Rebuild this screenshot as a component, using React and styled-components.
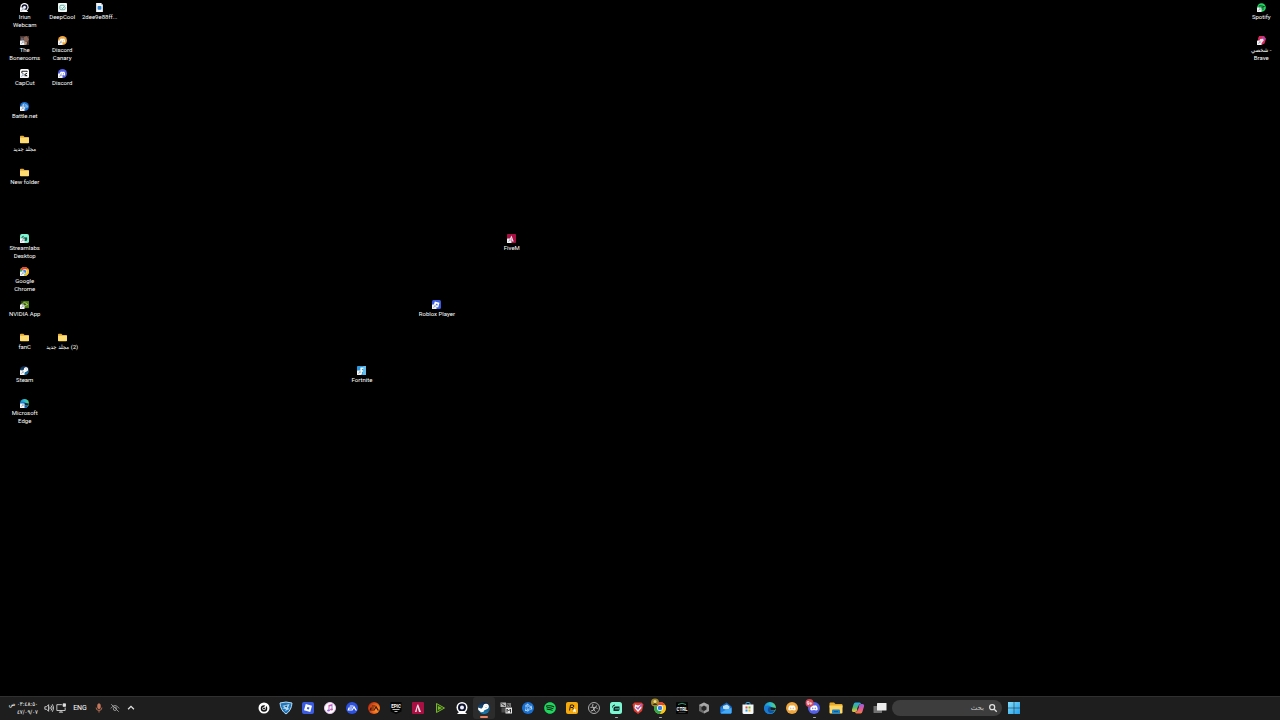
import React from "react";
import styled, { createGlobalStyle, css } from "styled-components";
import {
  FaBattleNet,
  FaDiscord,
  FaSpotify,
  FaSteamSymbol,
} from "react-icons/fa";

const GlobalStyle = createGlobalStyle`
  * {
    box-sizing: border-box;
  }

  body {
    margin: 0;
    background: #000;
    color: #fff;
    font-family: Roboto, "DejaVu Sans Condensed", "DejaVu Sans", sans-serif;
  }

  button,
  input {
    margin: 0;
    padding: 0;
    border: 0;
    background: none;
    color: inherit;
    font: inherit;
  }
`;

const Screen = styled.div`
  display: flex;
  flex-direction: column;
  min-height: 100vh;
`;

const Desktop = styled.main`
  flex: 1;
  display: grid;
  grid-template-columns: repeat(34, minmax(0, 1fr));
  grid-auto-rows: 33px;
  padding-left: 6px;
`;

const Shortcut = styled.button`
  grid-column: ${(props) => props.$col};
  grid-row: ${(props) => props.$row};
  display: flex;
  flex-direction: column;
  align-items: center;
  gap: 1px;
  padding-top: 3px;
`;

const ShortcutIcon = styled.svg`
  flex: none;
  width: 9px;
  height: 9px;
`;

const ShortcutName = styled.span`
  font-size: 6px;
  line-height: 8px;
  text-align: center;
  white-space: pre;
`;

const Taskbar = styled.footer`
  display: grid;
  grid-template-columns: 1fr auto 1fr;
  align-items: center;
  height: 24px;
  padding: 0 2px 1px 0;
  border-top: 1px solid #303030;
  background: #1e1e1e;
`;

const Tray = styled.div`
  display: flex;
  align-items: center;
  gap: 4px;
  padding-left: 8px;
`;

const Clock = styled.button`
  width: 30px;
  margin-right: 2px;
  font-family: "DejaVu Sans Condensed", "DejaVu Sans", sans-serif;
  font-size: 6px;
  line-height: 8px;
  text-align: right;
  white-space: nowrap;
`;

const ClockLine = styled.span`
  display: block;
`;

const TrayGroup = styled.div`
  display: flex;
  gap: ${(props) => props.$gap};
`;

const TrayButton = styled.button`
  display: flex;
`;

const TrayIcon = styled.svg`
  width: 10px;
  height: 10px;
`;

const Language = styled.button`
  width: 18px;
  margin: 0 1px;
  font-size: 7px;
  line-height: 10px;
`;

const Apps = styled.nav`
  display: flex;
  align-items: center;
`;

const AppButton = styled.button`
  position: relative;
  display: flex;
  align-items: center;
  justify-content: center;
  width: 22px;
  height: 22px;
  border-radius: 3px;

  ${(props) =>
    props.$state === "active" &&
    css`
      background: #2c2c2c;
    `}

  ${(props) =>
    props.$state &&
    css`
      &::after {
        content: "";
        position: absolute;
        bottom: 1px;
        width: ${props.$state === "active" ? "8px" : "3px"};
        height: ${props.$state === "active" ? "2px" : "1px"};
        border-radius: 1px;
        background: ${props.$state === "active" ? "#e8866a" : "#a5a5a5"};
      }
    `}
`;

const AppIcon = styled.svg`
  width: 12px;
  height: 12px;
  overflow: visible;
`;

const Search = styled.label`
  display: flex;
  align-items: center;
  gap: 4px;
  width: 110px;
  height: 16px;
  margin: 0 1px;
  padding: 0 4px;
  border-radius: 8px;
  background: #3d3d3d;
`;

const SearchInput = styled.input`
  flex: 1;
  min-width: 0;
  font-family: "DejaVu Sans", sans-serif;
  font-size: 7px;
  line-height: 12px;
  outline: 0;

  &::placeholder {
    color: #c4c4c4;
    opacity: 1;
  }
`;

/* All icons are drawn on a 24x24 canvas */

const Arrow = () => (
  <>
    <rect x="0" y="12" width="12" height="12" rx="1" fill="#f4f4f4" />
    <path
      d="M4 21q0-4 4-4M6 15h3v3"
      fill="none"
      stroke="#6d8aa6"
      strokeWidth="1.5"
    />
  </>
);

const Folder = () => (
  <>
    <path d="M0 4q0-2 2-2h7l3 3h10q2 0 2 2v12H0z" fill="#e3ac38" />
    <path d="M0 7h24v13q0 2-2 2H2q-2 0-2-2z" fill="#ffdc71" />
  </>
);

const Iriun = () => (
  <>
    <circle cx="12" cy="11" r="11" fill="#fff" />
    <circle cx="12" cy="11" r="6" fill="#eef" stroke="#10142c" strokeWidth="4" />
    <path d="M2 24l6-6h8l6 6z" fill="#fff" />
  </>
);

const DeepCool = () => (
  <>
    <rect width="24" height="24" rx="2" fill="#f1f8f6" />
    <path
      d="M17 6H8q-3 0-3 3v6q0 3 3 3h8q3 0 3-3v-4"
      fill="none"
      stroke="#39988d"
      strokeWidth="2"
    />
    <path d="M9 12l3 3 7-8" fill="none" stroke="#39988d" strokeWidth="2" />
  </>
);

const Document = () => (
  <>
    <path d="M3 0h13l5 5v19H3z" fill="#f2f6fa" />
    <path d="M16 0v5h5z" fill="#b9c7d4" />
    <rect x="7" y="8" width="10" height="10" rx="2" fill="#2e86d3" />
  </>
);

const Bonerooms = () => (
  <>
    <rect width="24" height="24" fill="#46322e" />
    <path d="M10 3l8-3 6 9-5 7-8-4z" fill="#8b6657" />
    <path d="M3 3l7 2-1 8-7-3z" fill="#6a6470" />
    <path d="M14 14l5 3-2 7h-6z" fill="#c09a7b" />
  </>
);

const CapCut = () => (
  <>
    <rect width="24" height="24" rx="4" fill="#fff" />
    <path
      d="M19 8V6H5v5l14 7H8M19 11L8 17"
      fill="none"
      stroke="#111"
      strokeWidth="2.5"
    />
  </>
);

const BattleNet = () => (
  <>
    <circle cx="12" cy="12" r="12" fill="#176fd2" />
    <FaBattleNet x="3" y="3" size={18} color="#d7efff" />
  </>
);

const DiscordMark = ({ color }) => (
  <>
    <circle cx="12" cy="12" r="12" fill={color} />
    <FaDiscord x="4" y="4" size={16} color="#fff" />
  </>
);

const Discord = () => <DiscordMark color="#5460e6" />;

const DiscordCanary = () => <DiscordMark color="#efa63c" />;

const DiscordBadge = () => (
  <>
    <Discord />
    <circle cx="3" cy="2" r="8" fill="#d94452" />
    <text
      x="3"
      y="6"
      fill="#fff"
      fontSize="10"
      fontWeight="700"
      textAnchor="middle"
    >
      9+
    </text>
  </>
);

const Streamlabs = () => (
  <>
    <rect width="24" height="24" rx="5" fill="#7df5d0" />
    <path d="M7 18v-5q0-4 4-4h8v6q0 3-3 3z" fill="#0b2a2a" />
    <path d="M12 12v3M16 12v3" stroke="#7df5d0" strokeWidth="2" />
    <path d="M5 11q0-5 5-5" fill="none" stroke="#0b2a2a" strokeWidth="2" />
  </>
);

const Chrome = () => (
  <>
    <circle cx="12" cy="12" r="12" fill="#fbc116" />
    <path d="M12 12L1.6 6A12 12 0 0 1 22.4 6z" fill="#e64435" />
    <path d="M12 12L1.6 6A12 12 0 0 0 12 24l5-9z" fill="#2fa650" />
    <path d="M12 6h10.400A12 12 0 0 1 12 24l5.5-9z" fill="#fbc116" />
    <circle cx="12" cy="12" r="6" fill="#fff" />
    <circle cx="12" cy="12" r="4.5" fill="#397fe6" />
  </>
);

const ChromeProfile = () => (
  <>
    <Chrome />
    <circle cx="2" cy="1" r="8" fill="#a3892b" />
    <circle cx="2" cy="-1" r="3" fill="#f0dc8a" />
    <path d="M-3 6q5-7 10 0z" fill="#352e16" />
  </>
);

const Nvidia = () => (
  <>
    <path d="M2 2h22v20H2z" fill="#243b0c" />
    <path d="M9 3h15v18H9z" fill="#568416" />
    <path
      d="M3 12q8-9 17 0-8 8-17 0z"
      fill="none"
      stroke="#c0e885"
      strokeWidth="2"
    />
    <circle cx="12" cy="12" r="3" fill="#1b2f08" />
  </>
);

const Steam = () => (
  <>
    <defs>
      <linearGradient id="steam" x1="0" y1="0" x2="0" y2="1">
        <stop offset="0" stopColor="#14213f" />
        <stop offset="1" stopColor="#1684bd" />
      </linearGradient>
    </defs>
    <circle cx="12" cy="12" r="12" fill="url(#steam)" />
    <path d="M0 11l9 4 4-4 5 3-6 3q-1 4-5 3l-6-4z" fill="#fff" />
    <circle cx="16" cy="9" r="4" fill="#14213f" stroke="#fff" strokeWidth="3" />
    <circle cx="8" cy="17" r="3" fill="#fff" />
    <FaSteamSymbol x="0" y="1" size={22} color="#fff" />
  </>
);

const Edge = () => (
  <>
    <defs>
      <linearGradient id="edge" x1="0" y1="0.5" x2="1" y2="0.2">
        <stop offset="0" stopColor="#1787d4" />
        <stop offset="0.6" stopColor="#29bed3" />
        <stop offset="1" stopColor="#62d862" />
      </linearGradient>
    </defs>
    <circle cx="12" cy="12" r="12" fill="url(#edge)" />
    <path
      d="M0 12q1-5 8-5 6 0 7 5 0 2-2 3 2 4 9 2-3 7-10 7Q1 24 0 12z"
      fill="#1a7ad2"
    />
    <path d="M9 11q-4 7 3 11 6 1 10-5-10 3-10-3 2-1 1-3-2-2-4 0z" fill="#14509a" />
    <path d="M12 14q2-1 1-4 5 1 11 2 0 4-5 5-6 0-7-3z" fill="#1e1e1e" />
  </>
);

const FiveM = () => (
  <>
    <rect width="24" height="24" rx="2" fill="#a80f43" />
    <path d="M6 20l4-13 2-3 6 16h-4l-3-10-2 10z" fill="#fbdde7" />
  </>
);

const Roblox = () => (
  <>
    <rect width="24" height="24" rx="4" fill="#3b5be0" />
    <path
      d="M7.500 4L20 7.500 16.500 20 4 16.500zM10.800 9.800l-1.100 4.200 4.200 1.100 1.100-4.200z"
      fill="#fff"
      fillRule="evenodd"
    />
  </>
);

const Fortnite = () => (
  <>
    <rect width="24" height="24" rx="2" fill="#2a9be0" />
    <path d="M17 0h7v24h-9z" fill="#64bdec" />
    <path d="M9 4h8v4h-4v3h3v4h-3v6H9z" fill="#fff" />
  </>
);

const Spotify = () => (
  <>
    <circle cx="12" cy="12" r="11" fill="#0b1e11" />
    <FaSpotify size={24} color="#1fd75f" />
  </>
);

const BraveProfile = () => (
  <>
    <path d="M6 0h13l5 7-4 13-8 4-9-5V5z" fill="#d92b62" />
    <path d="M13 2l10 4-6 8z" fill="#9b4cc4" />
    <path d="M8 8l8-1 2 5-6 7-5-5z" fill="#ffe0dd" />
  </>
);

const Disc = () => (
  <>
    <circle cx="12" cy="12" r="11" fill="#fff" />
    <circle cx="12" cy="13" r="5" fill="#fff" stroke="#111" strokeWidth="3" />
    <path d="M12 13l6-9" stroke="#fff" strokeWidth="3" />
    <circle cx="12" cy="13" r="2" fill="#111" />
  </>
);

const RocketLeague = () => (
  <>
    <path
      d="M0 2q12-4 24 0-1 15-12 22Q1 17 0 2z"
      fill="#1e75bb"
      stroke="#bcdcf0"
      strokeWidth="2"
    />
    <path d="M4 8l15-4-3 8 3 2-9 4 2-4-7-1 4-3z" fill="#b4daf0" />
    <path d="M9 8l6-1-2 4z" fill="#174877" />
  </>
);

const Music = () => (
  <>
    <defs>
      <linearGradient id="music" x1="0" y1="0" x2="1" y2="1">
        <stop offset="0" stopColor="#fa4b79" />
        <stop offset="0.5" stopColor="#b462dc" />
        <stop offset="1" stopColor="#4ca8ef" />
      </linearGradient>
    </defs>
    <circle cx="12" cy="12" r="11" fill="#fff" stroke="#e7c8ee" strokeWidth="2" />
    <path d="M9 6l8-2v11h-2V8l-4 1v8H9z" fill="url(#music)" />
    <ellipse cx="9" cy="17" rx="3" ry="2" fill="#9b6ae2" />
    <ellipse cx="15" cy="15" rx="3" ry="2" fill="#d457aa" />
  </>
);

const EaMark = ({ fill, ink }) => (
  <>
    <circle cx="12" cy="12" r="12" fill={fill} />
    <path
      d="M8 7h7l-1 2H7zM5 11h8l-1 2H7l-1 2h6l4-8 6 10h-3l-3-5-3 5H3z"
      fill={ink}
    />
  </>
);

const EaApp = () => <EaMark fill="#2c50e0" ink="#fff" />;

const EaPlay = () => (
  <>
    <defs>
      <radialGradient id="ember" cx="0.7" cy="0.6" r="0.7">
        <stop offset="0" stopColor="#ffa02d" />
        <stop offset="0.5" stopColor="#f06a1c" />
        <stop offset="1" stopColor="#b82c12" />
      </radialGradient>
    </defs>
    <EaMark fill="url(#ember)" ink="#4a1209" />
  </>
);

const Epic = () => (
  <>
    <path d="M1 0h22v19l-11 5-11-5z" fill="#050505" />
    <text
      x="12"
      y="11"
      fill="#fff"
      fontSize="9"
      fontWeight="700"
      textAnchor="middle"
    >
      EPIC
    </text>
    <path d="M5 15h14M9 19h6" stroke="#bbb" strokeWidth="2" />
  </>
);

const GreenPlay = () => (
  <>
    <path
      d="M5 3l16 9-16 9z"
      fill="#2a4510"
      stroke="#79b531"
      strokeWidth="2"
    />
    <path d="M8 8l8 4-8 4z" fill="#79b531" />
  </>
);

const Patchwork = () => (
  <>
    <path d="M1 1h11v9H1z" fill="#b8b8b8" />
    <path d="M13 2h9v8h-9z" fill="#737373" />
    <path d="M3 11h8v10H3z" fill="#4c4c4c" />
    <path d="M11 11h13v12H11z" fill="#e9e9e9" />
    <path d="M3 3l7 5M14 3l5 6" stroke="#333" strokeWidth="2" />
    <path d="M14 21v-7l3 4 4-4v7" fill="none" stroke="#333" strokeWidth="2" />
  </>
);

const Rockstar = () => (
  <>
    <rect width="24" height="24" rx="4" fill="#f5a90d" />
    <path
      d="M7 17L9 6h5q4 1 0 5H9M13 11q2 1 1 5"
      fill="none"
      stroke="#2a1c00"
      strokeWidth="2"
    />
    <path d="M17 12l1 3h3l-2 2 1 4-3-2-3 2 1-4-2-2h3z" fill="#fff" />
  </>
);

const Obs = () => (
  <>
    <circle cx="12" cy="12" r="11" fill="#242424" stroke="#aaa" strokeWidth="2" />
    <path
      d="M12 12q-5-3-2-8M12 12q5-3 7 2M12 12q0 6-6 6M5 11q3-2 7 1M17 7q0 4-5 5M15 19q-4-2-3-7"
      fill="none"
      stroke="#b4b4b4"
      strokeWidth="2"
    />
  </>
);

const ShieldCheck = () => (
  <>
    <path d="M5 1h14l4 4-3 13-8 6-8-6L1 5z" fill="#df3a32" />
    <path d="M6 5l6 2 6-2 1 7-7 8-7-8z" fill="#fff" />
    <path d="M8 10l4 4 8-10" fill="none" stroke="#b05bb5" strokeWidth="3" />
  </>
);

const Ctrl = () => (
  <>
    <rect width="24" height="24" rx="2" fill="#050505" />
    <path d="M4 5q8-5 16 0" fill="none" stroke="#319970" strokeWidth="2" />
    <text
      x="12"
      y="17"
      fill="#fff"
      fontSize="9"
      fontWeight="700"
      textAnchor="middle"
    >
      CTRL
    </text>
    <path d="M5 21h14" stroke="#666" />
  </>
);

const Cube = () => (
  <>
    <path d="M12 1l10 5v12l-10 5-10-5V6z" fill="#6b6b6b" />
    <path d="M12 1l10 5-10 6L2 6z" fill="#a8a8a8" />
    <path d="M12 12l10-6v12l-10 5z" fill="#a0a0a0" />
    <path d="M12 7l5 3v5l-5 3-5-3v-5z" fill="#262626" />
  </>
);

const Outlook = () => (
  <>
    <path d="M1 9L13 1l10 8v12q0 2-2 2H3q-2 0-2-2z" fill="#1268c5" />
    <path d="M6 8l8-3 5 4v6H6z" fill="#b8e0fb" />
    <path d="M1 10l12 7 10-7v11q0 2-2 2H3q-2 0-2-2z" fill="#1f7fe0" />
    <path d="M1 22l12-7 10-3v9q0 2-2 2H3z" fill="#45aaf4" />
  </>
);

const Store = () => (
  <>
    <path
      d="M8 6V3q0-2 2-2h4q2 0 2 2v3"
      fill="none"
      stroke="#35a5e4"
      strokeWidth="2"
    />
    <path d="M1 5h22v16q0 3-3 3H4q-3 0-3-3z" fill="#f2f6f9" />
    <path d="M7 9h4v4H7z" fill="#e74d2e" />
    <path d="M13 9h4v4h-4z" fill="#78b51b" />
    <path d="M7 15h4v4H7z" fill="#209fe2" />
    <path d="M13 15h4v4h-4z" fill="#f5b51c" />
  </>
);

const Explorer = () => (
  <>
    <path d="M-1 3q0-2 2-2h7l3 3h12q2 0 2 2v5H-1z" fill="#e8a925" />
    <path d="M-1 7h26v14q0 2-2 2H1q-2 0-2-2z" fill="#ffd762" />
    <path d="M4 23v-6q0-2 2-2h12q2 0 2 2v6z" fill="#1686cf" />
    <path d="M8 19h8" stroke="#105c96" strokeWidth="2" />
  </>
);

const Copilot = () => (
  <>
    <defs>
      <linearGradient id="pilotLeft" x1="0" y1="0" x2="0" y2="1">
        <stop offset="0" stopColor="#26a9ed" />
        <stop offset="0.5" stopColor="#4cb96d" />
        <stop offset="1" stopColor="#f1c33b" />
      </linearGradient>
      <linearGradient id="pilotRight" x1="0" y1="0" x2="0" y2="1">
        <stop offset="0" stopColor="#9260df" />
        <stop offset="0.5" stopColor="#e5579a" />
        <stop offset="1" stopColor="#f47c3c" />
      </linearGradient>
    </defs>
    <path
      d="M7 1h8q3 0 3 4h-4l-4 12q-1 3-4 3H3q-4 0-3-5L3 5q1-4 4-4z"
      fill="url(#pilotLeft)"
    />
    <path
      d="M17 23H9q-3 0-3-4h4l4-12q1-3 4-3h3q4 0 3 5l-3 10q-1 4-4 4z"
      fill="url(#pilotRight)"
    />
    <path d="M12 9h2l-2 6h-2z" fill="#1e1e1e" />
  </>
);

const TaskView = () => (
  <>
    <rect x="-1" y="8" width="17" height="14" rx="1" fill="#707070" />
    <rect x="6" y="2" width="19" height="15" rx="1" fill="#ececec" />
  </>
);

const Start = () => (
  <>
    <defs>
      <linearGradient id="start" x1="0" y1="0" x2="1" y2="1">
        <stop offset="0" stopColor="#7fdcfb" />
        <stop offset="1" stopColor="#219fe9" />
      </linearGradient>
    </defs>
    <path
      d="M0 0h11.5v11.5H0zM12.5 0H24v11.5H12.5zM0 12.5h11.5V24H0zM12.5 12.5H24V24H12.5z"
      fill="url(#start)"
    />
  </>
);

const shortcuts = [
  { name: "Iriun\nWebcam", icon: Iriun, col: 1, row: 1 },
  { name: "DeepCool", icon: DeepCool, col: 2, row: 1, plain: true },
  { name: "2dee9e88ff...", icon: Document, col: 3, row: 1, plain: true },
  { name: "The\nBonerooms", icon: Bonerooms, col: 1, row: 2 },
  { name: "Discord\nCanary", icon: DiscordCanary, col: 2, row: 2 },
  { name: "CapCut", icon: CapCut, col: 1, row: 3 },
  { name: "Discord", icon: Discord, col: 2, row: 3 },
  { name: "Battle.net", icon: BattleNet, col: 1, row: 4 },
  { name: "مجلد جديد", icon: Folder, col: 1, row: 5, plain: true },
  { name: "New folder", icon: Folder, col: 1, row: 6, plain: true },
  { name: "Streamlabs\nDesktop", icon: Streamlabs, col: 1, row: 8 },
  { name: "Google\nChrome", icon: Chrome, col: 1, row: 9 },
  { name: "NVIDIA App", icon: Nvidia, col: 1, row: 10 },
  { name: "fanC", icon: Folder, col: 1, row: 11, plain: true },
  { name: "(2) مجلد جديد", icon: Folder, col: 2, row: 11, plain: true },
  { name: "Steam", icon: Steam, col: 1, row: 12 },
  { name: "Microsoft\nEdge", icon: Edge, col: 1, row: 13 },
  { name: "Fortnite", icon: Fortnite, col: 10, row: 12 },
  { name: "Roblox Player", icon: Roblox, col: 12, row: 10 },
  { name: "FiveM", icon: FiveM, col: 14, row: 8 },
  { name: "Spotify", icon: Spotify, col: 34, row: 1 },
  { name: "شخصي -\nBrave", icon: BraveProfile, col: 34, row: 2, dir: "ltr" },
];

const apps = [
  { name: "Disc", icon: Disc },
  { name: "Rocket League", icon: RocketLeague },
  { name: "Roblox", icon: Roblox },
  { name: "iTunes", icon: Music },
  { name: "EA", icon: EaApp },
  { name: "EA Play", icon: EaPlay },
  { name: "Epic Games", icon: Epic },
  { name: "FiveM", icon: FiveM },
  { name: "Play", icon: GreenPlay },
  { name: "Iriun Webcam", icon: Iriun },
  { name: "Steam", icon: Steam, state: "active" },
  { name: "Mods", icon: Patchwork },
  { name: "Battle.net", icon: BattleNet },
  { name: "Spotify", icon: Spotify },
  { name: "Rockstar Games", icon: Rockstar },
  { name: "OBS Studio", icon: Obs },
  { name: "Streamlabs", icon: Streamlabs, state: "open" },
  { name: "Brave", icon: ShieldCheck },
  { name: "Google Chrome", icon: ChromeProfile, state: "open" },
  { name: "CTRL", icon: Ctrl },
  { name: "Cube", icon: Cube },
  { name: "Outlook", icon: Outlook },
  { name: "Microsoft Store", icon: Store },
  { name: "Microsoft Edge", icon: Edge },
  { name: "Discord Canary", icon: DiscordCanary },
  { name: "Discord", icon: DiscordBadge, state: "open" },
  { name: "File Explorer", icon: Explorer },
  { name: "Copilot", icon: Copilot },
  { name: "Task View", icon: TaskView },
];

const DesktopShortcut = ({ name, icon: Icon, col, row, plain, dir }) => (
  <Shortcut $col={col} $row={row}>
    <ShortcutIcon viewBox="0 0 24 24" aria-hidden="true">
      <Icon />
      {!plain && <Arrow />}
    </ShortcutIcon>
    <ShortcutName dir={dir || "auto"}>{name}</ShortcutName>
  </Shortcut>
);

const TaskbarApp = ({ name, icon: Icon, state }) => (
  <AppButton $state={state} aria-label={name}>
    <AppIcon viewBox="0 0 24 24" aria-hidden="true">
      <Icon />
    </AppIcon>
  </AppButton>
);

const TrayItem = ({ label, color = "#e4e4e4", children }) => (
  <TrayButton aria-label={label}>
    <TrayIcon
      viewBox="0 0 24 24"
      fill="none"
      stroke={color}
      strokeWidth="2"
      aria-hidden="true"
    >
      {children}
    </TrayIcon>
  </TrayButton>
);

const SystemTray = () => (
  <Tray>
    <Clock dir="rtl">
      <ClockLine>٠٣:٤٨:٥٠ ص</ClockLine>
      <ClockLine>٤٧/٠٩/٠٧</ClockLine>
    </Clock>
    <TrayGroup $gap="2px">
      <TrayItem label="Volume">
        <path d="M2 9h4l5-5v16l-5-5H2z" />
        <path d="M14 9q2 3 0 6M17 6q5 6 0 12M20 3q7 9 0 18" />
      </TrayItem>
      <TrayItem label="Network">
        <path d="M14 4H2v14h20v-7M7 22h10M12 18v4" />
        <path d="M17 2h6v6h-6z" fill="#e4e4e4" />
      </TrayItem>
    </TrayGroup>
    <Language>ENG</Language>
    <TrayGroup $gap="6px">
      <TrayItem label="Microphone" color="#c7775c">
        <rect x="9" y="2" width="6" height="12" rx="3" fill="#c7775c" />
        <path d="M5 11q0 7 7 7t7-7M12 18v5" />
      </TrayItem>
      <TrayItem label="Camera off" color="#a8a8a8">
        <path d="M2 13q10-14 20 0M3 3l18 18" />
        <circle cx="12" cy="14" r="4" />
      </TrayItem>
      <TrayItem label="Hidden icons">
        <path d="M5 15l7-7 7 7" strokeWidth="3" />
      </TrayItem>
    </TrayGroup>
  </Tray>
);

const App = () => {
  return (
    <Screen>
      <GlobalStyle />
      <Desktop>
        {shortcuts.map((item) => (
          <DesktopShortcut key={`${item.col}-${item.row}`} {...item} />
        ))}
      </Desktop>
      <Taskbar>
        <SystemTray />
        <Apps>
          {apps.map((item) => (
            <TaskbarApp key={item.name} {...item} />
          ))}
          <Search dir="rtl">
            <TrayIcon
              viewBox="0 0 24 24"
              fill="none"
              stroke="#e4e4e4"
              strokeWidth="3"
              aria-hidden="true"
            >
              <circle cx="10" cy="10" r="6" />
              <path d="M15 15l6 6" />
            </TrayIcon>
            <SearchInput type="text" placeholder="بحث" aria-label="بحث" />
          </Search>
          <TaskbarApp name="Start" icon={Start} />
        </Apps>
      </Taskbar>
    </Screen>
  );
};

export default App;
